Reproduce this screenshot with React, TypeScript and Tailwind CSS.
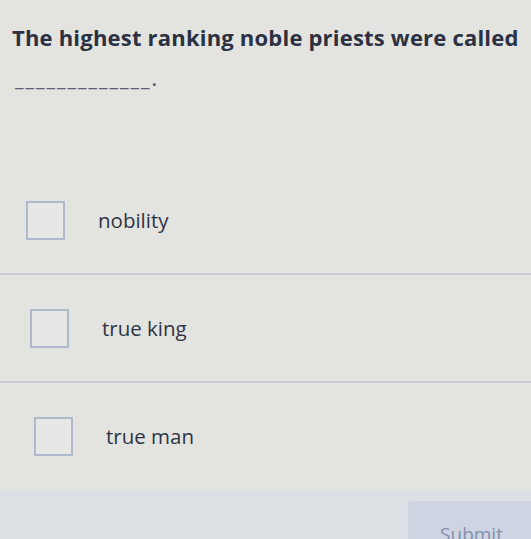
import React, { useState } from 'react';

const options = ['nobility', 'true king', 'true man'];

export default function App() {
  const [checked, setChecked] = useState<boolean[]>([false, false, false]);

  return (
    <div className="w-[531px] h-[539px] overflow-hidden bg-[#e3e4e0] flex flex-col" style={{ fontFamily: '"Open Sans", "Liberation Sans", sans-serif' }}>
      <div className="px-[12px] pt-[22px]">
        <h2 className="text-[22px] font-bold leading-[30px] text-[#2b3142] tracking-[0.2px]">The highest ranking noble priests were called</h2>
        <p className="mt-[15px] ml-[3px] text-[#5a6072] text-[20px] leading-[24px] tracking-[2px] whitespace-nowrap font-semibold">_____________.</p>
      </div>

      <div className="mt-[76px] flex flex-col">
        {options.map((opt, i) => (
          <div key={opt} className={`flex items-center h-[108px] border-b-2 ${i === 2 ? 'border-transparent' : 'border-[#c8ccd8]'}`}>
            <label className="flex items-center cursor-pointer" style={{ marginLeft: 26 + i * 4 }}>
              <input
                type="checkbox"
                className="sr-only"
                checked={checked[i]}
                onChange={() => setChecked(c => c.map((v, j) => (j === i ? !v : v)))}
              />
              <span className="w-[39px] h-[39px] border-2 border-[#b0b8cb] bg-[#e7e8e5]" />
              <span className="ml-[33px] text-[20.5px] text-[#2e3446]">{opt}</span>
            </label>
          </div>
        ))}
      </div>

      <div className="flex-1 bg-[#dcdfe3] flex justify-end items-start pt-[10px]">
        <button className="w-[123px] h-[50px] bg-[#ced4e2] rounded-tl-[3px] text-[#8390ae] text-[19px] pt-[16px] pl-[4px]">Submit</button>
      </div>
    </div>
  );
}
